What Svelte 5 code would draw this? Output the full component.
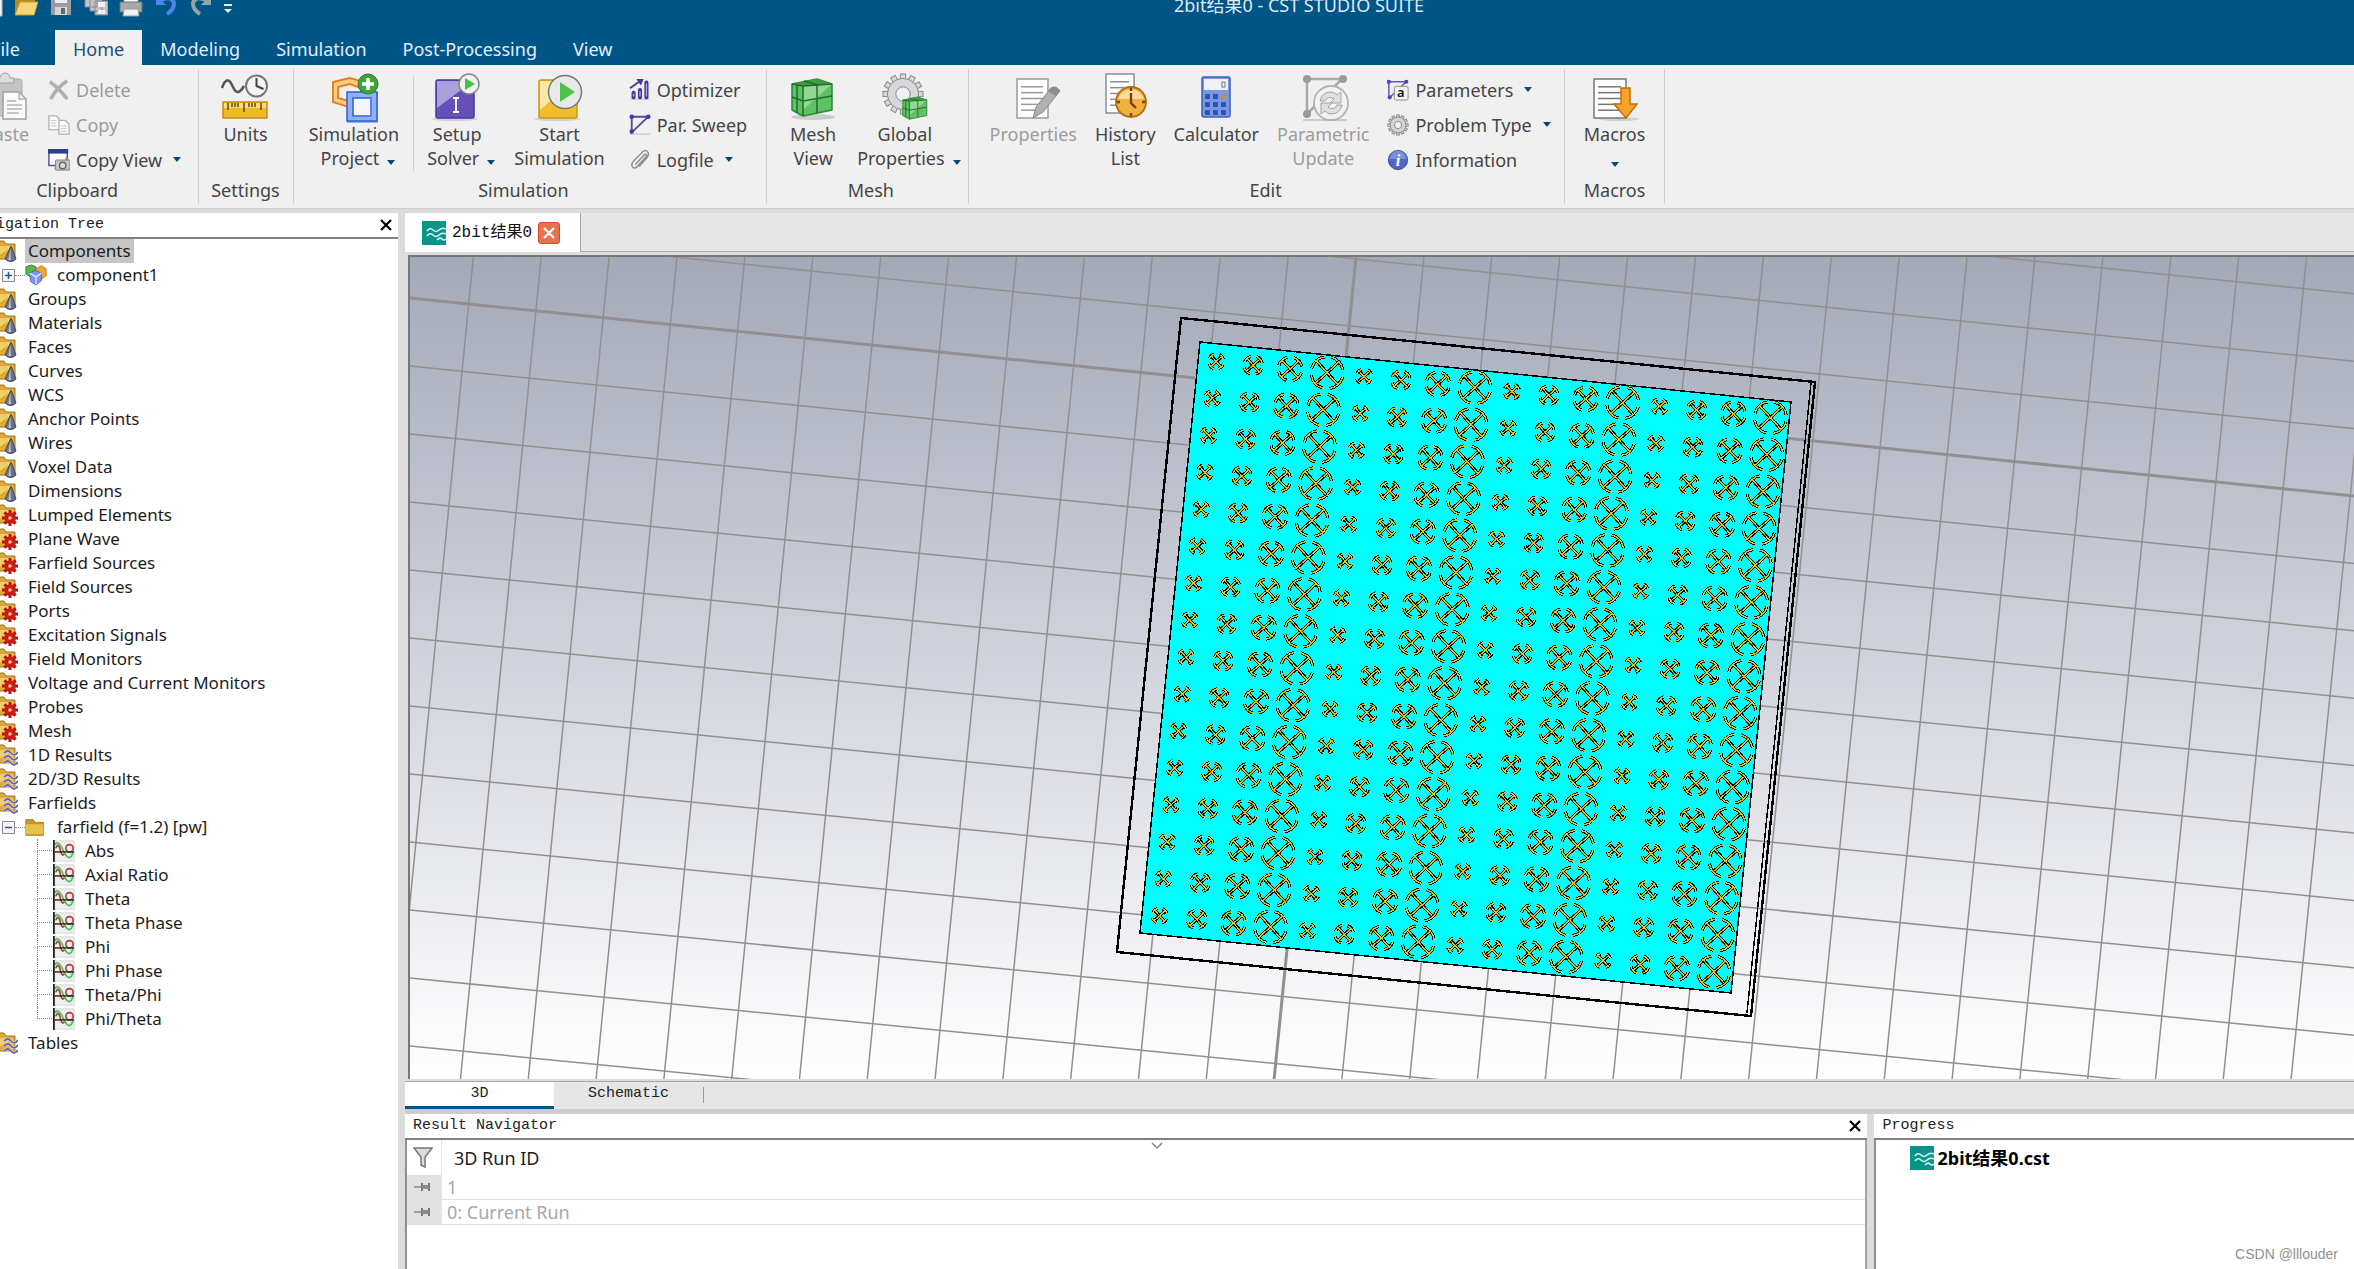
<script>
  const quickAccess = ['new', 'open', 'save', 'saveall', 'print', 'undo', 'redo'];
  const tabs = ['Home', 'Modeling', 'Simulation', 'Post-Processing', 'View'];

  const groups = [
    {
      name: 'Clipboard',
      items: [
        { icon: 'paste', lines: ['Paste'], disabled: true },
        {
          stack: [
            { icon: 'delete', label: 'Delete', disabled: true },
            { icon: 'copy', label: 'Copy', disabled: true },
            { icon: 'copyview', label: 'Copy View', arrow: true }
          ]
        }
      ]
    },
    { name: 'Settings', items: [{ icon: 'units', lines: ['Units'] }] },
    {
      name: 'Simulation',
      items: [
        { icon: 'project', lines: ['Simulation', 'Project'], arrow: true },
        { divider: true },
        { icon: 'solver', lines: ['Setup', 'Solver'], arrow: true },
        { icon: 'start', lines: ['Start', 'Simulation'] },
        {
          stack: [
            { icon: 'optimizer', label: 'Optimizer' },
            { icon: 'sweep', label: 'Par. Sweep' },
            { icon: 'clip', label: 'Logfile', arrow: true }
          ]
        }
      ]
    },
    {
      name: 'Mesh',
      items: [
        { icon: 'mesh', lines: ['Mesh', 'View'] },
        { icon: 'global', lines: ['Global', 'Properties'], arrow: true }
      ]
    },
    {
      name: 'Edit',
      items: [
        { icon: 'properties', lines: ['Properties'], disabled: true },
        { icon: 'history', lines: ['History', 'List'] },
        { icon: 'calculator', lines: ['Calculator'] },
        { icon: 'parametric', lines: ['Parametric', 'Update'], disabled: true },
        {
          stack: [
            { icon: 'parameters', label: 'Parameters', arrow: true },
            { icon: 'gear', label: 'Problem Type', arrow: true },
            { icon: 'info', label: 'Information' }
          ]
        }
      ]
    },
    { name: 'Macros', items: [{ icon: 'macros', lines: ['Macros', ''], arrow: true }] }
  ];

  const tree = [
    { label: 'Components', icon: 'cone', selected: true },
    { label: 'component1', icon: 'cubes', level: 1, expander: '+' },
    ...['Groups', 'Materials', 'Faces', 'Curves', 'WCS', 'Anchor Points', 'Wires', 'Voxel Data', 'Dimensions'].map(
      (label) => ({ label, icon: 'cone' })
    ),
    ...[
      'Lumped Elements',
      'Plane Wave',
      'Farfield Sources',
      'Field Sources',
      'Ports',
      'Excitation Signals',
      'Field Monitors',
      'Voltage and Current Monitors',
      'Probes',
      'Mesh'
    ].map((label) => ({ label, icon: 'redgear' })),
    ...['1D Results', '2D/3D Results', 'Farfields'].map((label) => ({ label, icon: 'waves' })),
    { label: 'farfield (f=1.2) [pw]', icon: 'folder', level: 1, expander: '-' },
    ...['Abs', 'Axial Ratio', 'Theta', 'Theta Phase', 'Phi', 'Phi Phase', 'Theta/Phi', 'Phi/Theta'].map(
      (label, i) => ({ label, icon: 'plot', level: 2, last: i === 7 })
    ),
    { label: 'Tables', icon: 'waves' }
  ];

  const runs = ['1', '0: Current Run'];

  // working plane grid, in the coordinates of the 3D view
  const rows = Array.from({ length: 15 }, (_, i) => i - 3).map((n) => ({
    n,
    y1: 41 + 68 * n,
    y2: 239 + 67.4 * n
  }));
  const cols = Array.from({ length: 33 }, (_, i) => i - 15).map((n) => ({
    n,
    x1: 946 + 67.9 * n,
    x2: 864 + 67.8 * n
  }));

  // four-step phase coding: the element grows from column to column
  const elements = [
    { r: 7.6, spread: 0.42 },
    { r: 9.2, spread: 0.48 },
    { r: 11.8, spread: 0.52 },
    { r: 16, spread: 0.57 }
  ].map(({ r, spread }) => {
    let d = '';
    for (let k = 0; k < 4; k++) {
      const a = Math.PI / 4 + (k * Math.PI) / 2;
      const p = (t) => `${(r * Math.cos(t)).toFixed(2)} ${(r * Math.sin(t)).toFixed(2)}`;
      d += `M0 0L${p(a)}M${p(a - spread)}A${r} ${r} 0 0 1 ${p(a + spread)}`;
    }
    return d;
  });

  const cells = [];
  for (let row = 0; row < 16; row++) {
    for (let col = 0; col < 16; col++) {
      cells.push({
        x: 806.2 + col * 36.95 - row * 3.77,
        y: 104.5 + col * 3.74 + row * 36.95,
        d: elements[col % 4]
      });
    }
  }

  let activeTab = 'Home';
  let activeView = '3D';
</script>

{#snippet gearShape(cx, cy, r, fill, stroke)}
  {#each Array.from({ length: 12 }, (_, i) => i * 30) as angle}
    <rect x={cx - r * 0.13} y={cy - r} width={r * 0.26} height={r * 0.4} {fill} {stroke} transform="rotate({angle} {cx} {cy})" />
  {/each}
  <circle {cx} {cy} r={r * 0.78} {fill} {stroke} />
  <circle {cx} {cy} r={r * 0.36} fill="#f0f0f0" {stroke} />
{/snippet}

{#snippet meshCube()}
  <path d="M3 10 28 5 43 10V36L14 42 3 36z" fill="#5fc064" stroke="#2c8a34" stroke-width="1.5" stroke-linejoin="round" />
  <path d="M3 10 28 5 43 10 14 12z" fill="#3f9d45" />
  <path d="M14 12 43 10 14 36z" fill="#a6e0a4" opacity=".7" />
  <path d="M14 12V42M14 12 43 10M3 10 14 12M28 11V39M3 23 14 27 43 22M8 11V39M15 7 29 11" fill="none" stroke="#1f6e28" stroke-width="1.5" />
{/snippet}

{#snippet page(x, y, w, h, stroke)}
  <rect {x} {y} width={w} height={h} fill="#fff" {stroke} stroke-width="1.5" />
  {#each [0.2, 0.35, 0.5, 0.65, 0.8] as t}
    <path d="M{x + 4} {y + h * t}H{x + w - 5}" {stroke} stroke-width="1.5" />
  {/each}
{/snippet}

{#snippet bigIcon(name)}
  <svg class="big-icon" viewBox="0 0 48 48" aria-hidden="true">
    {#if name === 'paste'}
      <rect x="6" y="5" width="34" height="37" rx="3" fill="#c4c4c4" stroke="#ababab" />
      <path d="M14 9V4h4a5 5 0 0 1 10 0h4v5z" fill="#dcdcdc" stroke="#a0a0a0" />
      <path d="M21 18h16l7 7v20H21z" fill="#fafafa" stroke="#a0a0a0" stroke-width="1.5" />
      <path d="M37 18v7h7M25 27h9M25 31h15M25 35h15M25 39h12" fill="none" stroke="#b4b4b4" stroke-width="1.5" />
    {:else if name === 'units'}
      <path d="M1 14C4 5 8 4 11 11s6 11 12 1" fill="none" stroke="#555" stroke-width="2.5" />
      <circle cx="35.5" cy="12" r="10.5" fill="#f4f4f4" stroke="#777" stroke-width="2" />
      <path d="M35.5 4v8l7 3" fill="none" stroke="#444" stroke-width="2" />
      <rect x="2" y="28" width="44" height="16" fill="#edbb28" stroke="#cc8614" stroke-width="1.5" />
      <rect x="3" y="29" width="42" height="5" fill="#f8dc7a" />
      <path d="M7 29v7M11 29v4M14 29v4M17 29v4M23 29v9M28 29v4M31 29v4M34 29v4M40 29v7" stroke="#5e4a10" stroke-width="1.5" />
    {:else if name === 'project'}
      <path d="M3 8 20 4l17 5v17l-15 8L3 28z" fill="#ffcc85" stroke="#e0851c" stroke-width="2" />
      <path d="M8 13 20 10l11 4v9l-9 5-14-4z" fill="#f0f0f0" stroke="#e0851c" stroke-width="2" />
      <rect x="20" y="21" width="25" height="25" fill="none" stroke="#8fb0f4" stroke-width="6" />
      <rect x="17" y="18" width="30" height="29" fill="none" stroke="#2f5ed0" stroke-width="1.5" />
      <rect x="23" y="24" width="18" height="18" fill="#f4f6fb" stroke="#2f5ed0" stroke-width="1.5" />
      <circle cx="38" cy="10" r="10" fill="#3da43b" stroke="#277e29" />
      <path d="M38 4v12M32 10h12" stroke="#fff" stroke-width="3.5" />
    {:else if name === 'solver'}
      <ellipse cx="22" cy="45" rx="23" ry="2" fill="#d2d2d2" />
      <rect x="3" y="6" width="38" height="38" rx="2" fill="#6650b8" stroke="#4a36a0" stroke-width="1.5" />
      <path d="M4 7H40L4 34z" fill="#aaa0dc" />
      <path d="M20 24h6M20 38h6M23 24v14" stroke="#fff" stroke-width="1.8" />
      <circle cx="36" cy="10" r="10" fill="#f0f0f0" stroke="#888" stroke-width="1.5" />
      <path d="M32 4v12l10-6z" fill="#46c044" />
    {:else if name === 'start'}
      <ellipse cx="22" cy="45" rx="23" ry="2" fill="#d2d2d2" />
      <rect x="4" y="6" width="38" height="38" rx="2" fill="#f2bd2a" stroke="#d19516" stroke-width="1.5" />
      <path d="M5 7H38L5 36z" fill="#fbe7a8" />
      <circle cx="30" cy="18" r="16.5" fill="#e8e8e8" stroke="#777" stroke-width="1.5" />
      <path d="M25 8v20l15-10z" fill="#4cc24a" />
    {:else if name === 'mesh'}
      <ellipse cx="24" cy="43" rx="22" ry="3" fill="#ccc" />
      {@render meshCube()}
    {:else if name === 'global'}
      {@render gearShape(22, 20, 20, '#d8d8dc', '#8a8a8a')}
      <g transform="translate(20 20) scale(.6)">{@render meshCube()}</g>
    {:else if name === 'properties'}
      {@render page(8, 5, 31, 39, '#9a9a9a')}
      <path d="M24 44l3-11L42 14q5-3 9 3L34 38z" fill="#b0b0b0" stroke="#8a8a8a" />
      <path d="M42 14q5-3 9 3l-4 5-8-5z" fill="#8c8c8c" />
    {:else if name === 'history'}
      {@render page(5, 0, 28, 39, '#8c8c8c')}
      <circle cx="30" cy="28" r="15" fill="#f2b03c" stroke="#b3690f" stroke-width="1.8" />
      <path d="M17 25a13.5 13.5 0 0 1 26 0z" fill="#fde6b4" opacity=".8" />
      <path d="M30 19v10l5 5M30 14v3M30 39v3M16 28h3M41 28h3" fill="none" stroke="#7d3c0b" stroke-width="2.4" />
    {:else if name === 'calculator'}
      <rect x="10" y="3" width="28" height="40" rx="2" fill="#7a98e0" stroke="#3d60c0" stroke-width="1.5" />
      <rect x="12" y="5" width="24" height="11" fill="#eef2fc" />
      <rect x="30" y="8" width="3" height="5" fill="none" stroke="#777" />
      {#each [20, 28, 36] as y, r}
        {#each [13, 21, 29] as x, c}
          <rect {x} {y} width="5" height="5" rx="1" fill={r === 0 && c === 2 ? '#c98a3c' : '#2b52b4'} />
        {/each}
      {/each}
    {:else if name === 'parametric'}
      <path d="M4 46h44" stroke="#ccc" stroke-width="2" />
      <path d="M8 5V40L43 5z" fill="none" stroke="#a8a8a8" stroke-width="2.5" />
      <circle cx="8" cy="5" r="4" fill="#9a9a9a" />
      <circle cx="44" cy="5" r="4" fill="#9a9a9a" />
      <circle cx="8" cy="40" r="4" fill="#9a9a9a" />
      <circle cx="32" cy="29" r="17" fill="#f2f2f2" stroke="#b4b4b4" stroke-width="1.8" />
      <path d="M21 27q2-9 11-9 4 0 6 3l4-3v11H31l4-4q-6-4-9 2z" fill="#dedede" stroke="#a6a6a6" />
      <path d="M43 31q-2 9-11 9-4 0-6-3l-4 3V29h11l-4 4q6 4 9-2z" fill="#dedede" stroke="#a6a6a6" />
    {:else if name === 'macros'}
      <ellipse cx="28" cy="45" rx="20" ry="2" fill="#d2d2d2" />
      {@render page(3, 5, 32, 39, '#777')}
      <path d="M30 14h9v16h7L35 44 23 30h7z" fill="#f5a427" stroke="#c46d10" stroke-width="1.5" />
    {/if}
  </svg>
{/snippet}

{#snippet smallIcon(name)}
  <svg class="small-icon" viewBox="0 0 24 24" aria-hidden="true">
    {#if name === 'delete'}
      <path d="M2 3Q12 10 21 22M21 2Q9 10 3 22" fill="none" stroke="#b0b0b0" stroke-width="4" />
    {:else if name === 'copy'}
      <path d="M1 2h8l3 3v12H1zM12 7h7l4 4v11H12z" fill="#fafafa" stroke="#b4b4b4" stroke-width="1.5" />
      <path d="M3 7h6M3 10h6M3 13h6M14 13h6M14 16h6M14 19h6" stroke="#c4c4c4" />
    {:else if name === 'copyview'}
      <rect x="1" y="1" width="20" height="17" fill="#fff" stroke="#3a4f9e" stroke-width="1.5" />
      <rect x="0" y="0" width="22" height="5" fill="#2c3f91" />
      <rect x="8" y="12" width="16" height="11" rx="1" fill="#c4c4c4" stroke="#777" />
      <rect x="19" y="9" width="3" height="3" fill="#888" />
      <circle cx="16" cy="18" r="3.5" fill="#ddd" stroke="#666" stroke-width="1.5" />
    {:else if name === 'optimizer'}
      <path d="M1 22h22" stroke="#ccc" stroke-width="1.5" />
      <path d="M5 20v-5M12 20v-8M19 20V4" stroke="#46359a" stroke-width="4.5" stroke-linecap="round" />
      <path d="M5 19v-3M12 19v-6M19 19V5" stroke="#aba4dd" stroke-width="1.5" />
      <path d="M1 10 11 3" stroke="#46359a" stroke-width="2" />
      <path d="M8 0h8l-3 7z" fill="#46359a" />
    {:else if name === 'sweep'}
      <path d="M1 22h22" stroke="#ccc" stroke-width="1.5" />
      <path d="M3 3v17L21 3z" fill="none" stroke="#5a4896" stroke-width="2" />
      <circle cx="3" cy="3" r="2.5" fill="#4a36a8" />
      <circle cx="21" cy="3" r="2.5" fill="#4a36a8" />
      <circle cx="3" cy="19" r="2.5" fill="#4a36a8" />
    {:else if name === 'clip'}
      <path d="M7 17 17 6q3-1 2 2L9 19q-4 4-6-1 0-3 2-5L15 3q4-3 6 1 1 2-1 5l-9 10" fill="none" stroke="#909090" stroke-width="1.6" />
    {:else if name === 'parameters'}
      <path d="M2 21V3H21L2 21" fill="none" stroke="#6a51c8" stroke-width="1.6" />
      <circle cx="2" cy="3" r="2.3" fill="#5a3fc4" />
      <circle cx="21" cy="3" r="2.3" fill="#5a3fc4" />
      <circle cx="3" cy="20" r="2.3" fill="#5a3fc4" />
      <rect x="8" y="8" width="15" height="15" rx="2" fill="#f4f4f4" stroke="#888" />
      <text x="15" y="20" text-anchor="middle" class="glyph">a</text>
    {:else if name === 'gear'}
      {@render gearShape(12, 12, 11, '#d4d4d4', '#8a8a8a')}
    {:else if name === 'info'}
      <circle cx="12" cy="12" r="10.5" fill="#5068c4" stroke="#33479c" />
      <path d="M3 11a9 9 0 0 1 18 0z" fill="#8fa0e2" opacity=".7" />
      <text x="12" y="18" text-anchor="middle" class="glyph info">i</text>
    {/if}
  </svg>
{/snippet}

{#snippet quickIcon(name)}
  <svg class="small-icon" viewBox="0 0 24 24" aria-hidden="true">
    {#if name === 'new'}
      <path d="M3 0h20v23H3z" fill="#f4f4f4" stroke="#bbb" />
    {:else if name === 'open'}
      <path d="M1 3h10l2 2h8v17H1z" fill="#b98a20" />
      <path d="M6 9h18l-4 13H1z" fill="#f6d67a" stroke="#cc9a28" />
    {:else if name === 'save'}
      <path d="M2 1h20v21H2z" fill="#9c9ca0" />
      <path d="M6 1h12v9H6z" fill="#eee" />
      <path d="M6 14h12v8H6z" fill="#d6d6d6" />
      <path d="M12 15h4v6h-4z" fill="#666" />
    {:else if name === 'saveall'}
      <path d="M1 1h12v13H1zM6 5h12v13H6zM11 8h13v14H11z" fill="#c4c4c8" stroke="#88888c" />
      <path d="M14 9h7v5h-7zM14 17h7v4h-7z" fill="#f0f0f0" />
    {:else if name === 'print'}
      <path d="M5 0h14v10H5z" fill="#fafafa" stroke="#aaa" />
      <path d="M1 9h22v10H1z" fill="#a8a8ac" stroke="#707074" />
      <path d="M5 16h14l1 7H4z" fill="#f2f2f2" stroke="#999" />
      <circle cx="19" cy="12" r="1.5" fill="#6fe05c" />
    {:else if name === 'undo'}
      <path d="M4 9Q17 1 20 10q0 7-7 11" fill="none" stroke="#4c86ec" stroke-width="4" />
      <path d="M2 2v10h10z" fill="#4c86ec" />
    {:else if name === 'redo'}
      <path d="M20 9Q7 1 4 10q0 7 7 11" fill="none" stroke="#98a2aa" stroke-width="4" />
      <path d="M22 2v10H12z" fill="#98a2aa" />
    {/if}
  </svg>
{/snippet}

{#snippet treeIcon(name)}
  <svg class="tree-icon" viewBox="0 0 24 24" aria-hidden="true">
    {#if name === 'cone' || name === 'redgear' || name === 'waves'}
      <path d="M0 4q0-2 2-2h8l2 3h9v15H0z" fill="#dba83c" stroke="#a87415" />
      <path d="M0 7h20v12H0z" fill="#f1ce6c" />
      <path d="M20 7v12H0z" fill="#e0ac2c" />
    {/if}
    {#if name === 'cone'}
      <path d="M17 7 22 20q-5 5-11 0z" fill="#6d7186" stroke="#44475a" />
      <path d="M16.5 10 14 21h3z" fill="#b4b8cc" />
    {:else if name === 'redgear'}
      {#each [0, 45, 90, 135] as angle}
        <rect x="14.5" y="7" width="3" height="16" fill="#b51414" transform="rotate({angle} 16 15)" />
      {/each}
      <circle cx="16" cy="15" r="5.5" fill="#c81c1c" />
      <circle cx="16" cy="15" r="1.8" fill="#f1ce6c" />
    {:else if name === 'waves'}
      <path d="M10 10q4-4 7 0t7-1M10 15q4-4 7 0t7-1M10 20q4-4 7 0t7-1" fill="none" stroke="#f8ecc4" stroke-width="3" />
      <path d="M10 10q4-4 7 0t7-1M10 15q4-4 7 0t7-1M10 20q4-4 7 0t7-1" fill="none" stroke="#6a62b8" stroke-width="1.8" />
    {:else if name === 'folder'}
      <path d="M1 4h8l2 3h9v14H1z" fill="#c9932a" stroke="#a87415" />
      <path d="M1 9h19v11H1z" fill="#e9bf4e" />
    {:else if name === 'cubes'}
      <path d="M1 3l6-2 5 2v9l-6 2-5-3z" fill="#54b848" stroke="#2f8a2c" />
      <path d="M12 5l6-3 5 3v8l-6 4-5-3z" fill="#f4a634" stroke="#c47a18" />
      <path d="M5 10l6-3 7 3v8l-6 5-6-4z" fill="#7d96f2" stroke="#4a60cc" />
      <path d="M5 10l7 4 6-4M12 14v8" fill="none" stroke="#dfe5ff" stroke-width="1.5" />
    {:else if name === 'plot'}
      <path d="M1 1h22v22H1z" fill="#efefef" stroke="#d4d4d4" />
      <path d="M3 9q3-7 5 2t5 3" fill="none" stroke="#b83a3a" stroke-width="1.8" />
      <circle cx="18" cy="9" r="4" fill="none" stroke="#b83a3a" stroke-width="1.8" />
      <path d="M2 5q4-5 8 4t7 10 5-6" fill="none" stroke="#46c458" stroke-width="2" />
      <path d="M2 13h21" stroke="#222" stroke-width="1.5" />
      <path d="M1 0v24" stroke="#222" stroke-width="2" />
    {/if}
  </svg>
{/snippet}

{#snippet cstLogo()}
  <svg class="logo" viewBox="0 0 24 24" aria-hidden="true">
    <path d="M0 0h24v24H0z" fill="#0a938b" />
    <path d="M5 10q3-4 6-1t6 0 7-1M5 15q3-4 6-1t6 0 7-1M15 19q3-3 5-1t4 0" fill="none" stroke="#d8f2f0" stroke-width="1.6" />
  </svg>
{/snippet}

{#snippet cross()}
  <svg class="cross" viewBox="0 0 12 12" aria-hidden="true">
    <path d="M1 1 11 11M11 1 1 11" stroke="currentColor" stroke-width="2.2" />
  </svg>
{/snippet}

<div class="window">
  <header class="title-bar">
    <div class="quick-access">
      {#each quickAccess as name}
        <button type="button" aria-label={name}>{@render quickIcon(name)}</button>
      {/each}
      <button type="button" aria-label="Customize">
        <svg width="8" height="18" viewBox="0 0 8 18"><path d="M0 8h8v2H0zM0 13h8l-4 4z" fill="#e6eef4" /></svg>
      </button>
    </div>
    <h1>2bit结果0 - CST STUDIO SUITE</h1>
  </header>

  <nav class="tabs">
    <button type="button" class="file">File</button>
    {#each tabs as tab}
      <button type="button" class:active={activeTab === tab} on:click={() => (activeTab = tab)}>{tab}</button>
    {/each}
  </nav>

  <div class="ribbon">
    {#each groups as group}
      <section class="group {group.name.toLowerCase()}">
        <div class="group-items">
          {#each group.items as item}
            {#if item.divider}
              <span class="divider"></span>
            {:else if item.stack}
              <div class="stack">
                {#each item.stack as entry}
                  <button type="button" class="small" disabled={entry.disabled}>
                    {@render smallIcon(entry.icon)}
                    <span>{entry.label}</span>
                    {#if entry.arrow}<i class="arrow"></i>{/if}
                  </button>
                {/each}
              </div>
            {:else}
              <button type="button" class="big" disabled={item.disabled}>
                {@render bigIcon(item.icon)}
                {#each item.lines as line, i}
                  <span class="line">
                    {line}
                    {#if item.arrow && i === 1}<i class="arrow" class:after={line}></i>{/if}
                  </span>
                {/each}
              </button>
            {/if}
          {/each}
        </div>
        <h2>{group.name}</h2>
      </section>
    {/each}
  </div>

  <div class="workspace">
    <aside class="panel tree-panel">
      <div class="panel-title">
        <h3>Navigation Tree</h3>
        <button type="button" aria-label="Close navigation tree">{@render cross()}</button>
      </div>
      <ul class="tree">
        {#each tree as node}
          <li class="level-{node.level ?? 0}" class:last={node.last}>
            {#if node.expander}
              <button type="button" class="expander" aria-label="Toggle {node.label}">
                <svg width="13" height="13" viewBox="0 0 13 13">
                  <path d="M.5.5h12v12H.5z" fill="#f6f6f6" stroke="#8a8a8a" />
                  <path d={node.expander === '+' ? 'M3 6.5h7M6.5 3v7' : 'M3 6.5h7'} stroke="#2c4fa8" stroke-width="1.5" />
                </svg>
              </button>
              <span class="dots"></span>
            {/if}
            {@render treeIcon(node.icon)}
            <span class="node-label" class:selected={node.selected}>{node.label}</span>
          </li>
        {/each}
      </ul>
    </aside>

    <main>
      <div class="documents">
        <div class="document">
          {@render cstLogo()}
          <span>2bit结果0</span>
          <button type="button" aria-label="Close document">{@render cross()}</button>
        </div>
      </div>

      <div class="view">
        <svg class="scene" viewBox="0 0 1944 823" preserveAspectRatio="xMinYMin slice" role="img" aria-label="3D model">
          <defs>
            <linearGradient id="sky" x1="0" y1="0" x2="0" y2="1">
              <stop offset="0" stop-color="#a4a9b8" />
              <stop offset=".5" stop-color="#d2d4dd" />
              <stop offset="1" stop-color="#ffffff" />
            </linearGradient>
          </defs>
          <rect width="1944" height="823" fill="url(#sky)" />
          <g stroke="#909090">
            {#each rows as { n, y1, y2 }}
              <line x1="0" {y1} x2="1944" {y2} stroke-width={n === 0 ? 3 : 1.5} />
            {/each}
            {#each cols as { n, x1, x2 }}
              <line {x1} y1="0" {x2} y2="823" stroke-width={n === 0 ? 3 : 1.5} />
            {/each}
          </g>
          <g shape-rendering="crispEdges" fill="none" stroke="#000">
            <path d="M771 61 1405 125 1341 759 707 695z" stroke-width="2.4" />
            <path d="M1401 126 1337 756" stroke-width="1.5" />
            <path d="M790 85 1381 145 1321 736 730 676z" fill="#00ffff" stroke-width="1.5" />
            {#each cells as cell}
              <g transform="translate({cell.x} {cell.y}) rotate(3)">
                <path d={cell.d} stroke-width="3.2" />
                <path d={cell.d} stroke="#dcc612" stroke-width="1.3" />
              </g>
            {/each}
          </g>
        </svg>
      </div>

      <div class="view-tabs">
        {#each ['3D', 'Schematic'] as view}
          <button type="button" class:active={activeView === view} on:click={() => (activeView = view)}>{view}</button>
        {/each}
        <span class="tab-end"></span>
      </div>

      <div class="docks">
        <section class="panel results">
          <div class="panel-title">
            <h3>Result Navigator</h3>
            <button type="button" aria-label="Close result navigator">{@render cross()}</button>
          </div>
          <div class="panel-body">
            <svg class="chevron" width="12" height="8" viewBox="0 0 12 8"><path d="M1 1l5 5 5-5" fill="none" stroke="#888" stroke-width="1.5" /></svg>
            <table>
              <thead>
                <tr>
                  <th class="mark">
                    <svg width="20" height="22" viewBox="0 0 20 22"><path d="M1 1h18l-7 9v10l-4-2v-8z" fill="#dcdcdc" stroke="#777" stroke-width="1.5" /></svg>
                  </th>
                  <th>3D Run ID</th>
                </tr>
              </thead>
              <tbody>
                {#each runs as run}
                  <tr>
                    <td class="mark">
                      <svg width="18" height="8" viewBox="0 0 18 8"><path d="M1 4h7" stroke="#888" stroke-width="1.5" /><path d="M9 0v8M16 0v8" stroke="#777" stroke-width="2" /><path d="M9 2h7v4H9z" fill="#8a8a8a" /></svg>
                    </td>
                    <td>{run}</td>
                  </tr>
                {/each}
              </tbody>
            </table>
          </div>
        </section>

        <section class="panel progress">
          <div class="panel-title"><h3>Progress</h3></div>
          <div class="panel-body">
            <p class="job">{@render cstLogo()}2bit结果0.cst</p>
            <p class="credit">CSDN @lllouder</p>
          </div>
        </section>
      </div>
    </main>
  </div>
</div>

<style>
  :global(body) {
    margin: 0;
    overflow: hidden;
    background: #e6e6e6;
  }

  /* the window hangs over the top left corner of the screen */
  .window {
    display: flex;
    flex-direction: column;
    height: calc(100vh + 20px);
    margin: -20px 0 0 -36px;
    font-family: 'Noto Sans', 'Noto Sans CJK SC', sans-serif;
    font-size: 18px;
    line-height: 24px;
    color: #444;
  }

  button {
    margin: 0;
    padding: 0;
    border: none;
    background: none;
    font: inherit;
    color: inherit;
    white-space: nowrap;
  }

  button:disabled {
    color: #9c9c9c;
  }

  h1,
  h2,
  h3,
  p,
  ul {
    margin: 0;
    padding: 0;
    font: inherit;
  }

  svg {
    display: block;
    flex: none;
  }

  .title-bar {
    display: flex;
    align-items: center;
    height: 50px;
    background: #005587;
    color: #dfe9f0;
  }

  .title-bar h1 {
    flex: 1;
    padding-left: 12px;
    text-align: center;
  }

  .quick-access {
    display: flex;
    gap: 11px;
    padding-left: 15px;
  }

  .small-icon {
    width: 24px;
    height: 24px;
  }

  .tabs {
    display: flex;
    height: 35px;
    background: #005587;
    color: #e4eef5;
  }

  .tabs button {
    padding: 2px 18px 0;
  }

  .tabs .file {
    width: 83px;
    margin-right: 8px;
  }

  .tabs .active {
    background: #f0f0f0;
    color: #1d4f7c;
  }

  .ribbon {
    display: flex;
    height: 143px;
    border-bottom: 1px solid #cbcbcb;
    background: #f0f0f0;
  }

  .group {
    display: flex;
    flex-direction: column;
    justify-content: space-between;
    margin: 4px 0;
    padding: 3px 13px 2px 12px;
    border-right: 1px solid #cfcfcf;
  }

  .group.clipboard {
    padding-right: 17px;
    padding-left: 9px;
  }

  .group.simulation {
    padding-right: 19px;
    padding-left: 6px;
  }

  .group.mesh {
    padding-right: 5px;
  }

  .group.macros {
    padding-right: 10px;
    padding-left: 10px;
  }

  .group h2 {
    text-align: center;
  }

  .group-items {
    display: flex;
    justify-content: center;
    height: 105px;
  }

  .big {
    display: flex;
    flex-direction: column;
    align-items: center;
    padding: 2px 9px 0;
  }

  .mesh .big {
    padding-right: 10px;
    padding-left: 10px;
  }

  .simulation .big {
    padding-right: 12px;
  }

  .simulation .divider + .big {
    padding-right: 18px;
  }

  .big-icon {
    width: 48px;
    height: 48px;
    overflow: visible;
  }

  .line {
    display: flex;
    align-items: center;
    height: 24px;
  }

  .arrow {
    border: 4px solid transparent;
    border-top: 5px solid #004a75;
    border-bottom: none;
  }

  .line .arrow {
    margin-top: 12px;
  }

  .line .after {
    margin: 8px -8px 0 8px;
  }

  .divider {
    width: 1px;
    height: 95px;
    margin: 4px 4px 0 2px;
    background: #cfcfcf;
  }

  .stack {
    display: flex;
    flex-direction: column;
    padding-left: 12px;
  }

  .edit .stack,
  .clipboard .stack {
    padding-left: 9px;
  }

  .small {
    display: flex;
    align-items: center;
    gap: 6px;
    height: 35px;
  }

  .small .arrow {
    margin-left: 5px;
  }

  .small .small-icon {
    width: 22px;
    height: 22px;
  }

  .glyph {
    fill: #111;
    font-size: 14px;
    font-weight: 600;
  }

  .info {
    fill: #fff;
    font-family: 'Liberation Serif', serif;
    font-size: 18px;
    font-style: italic;
  }

  .workspace {
    display: flex;
    flex: 1;
    min-height: 0;
    padding-top: 4px;
    background: #dcdcdc;
  }

  .panel {
    display: flex;
    flex-direction: column;
    background: #fff;
  }

  .panel-title {
    display: flex;
    align-items: center;
    justify-content: space-between;
    height: 24px;
    padding: 0 6px 0 8px;
    border-bottom: 2px solid #808080;
    background: #fff;
    color: #222;
    font-family: 'Liberation Mono', 'Noto Sans CJK SC', monospace;
    font-size: 15px;
  }

  .cross {
    width: 12px;
    height: 12px;
    color: #000;
  }

  .tree-panel {
    width: 434px;
    flex: none;
  }

  .tree-panel .panel-title {
    padding-left: 5px;
  }

  .tree {
    list-style: none;
    color: #1c1c1c;
    font-size: 17px;
  }

  .tree li {
    display: flex;
    align-items: center;
    height: 24px;
    padding-left: 30px;
  }

  .tree .level-1 {
    padding-left: 38px;
  }

  .tree .level-2 {
    position: relative;
    padding-left: 89px;
  }

  .level-2::before {
    position: absolute;
    top: 0;
    left: 73px;
    width: 14px;
    height: 11px;
    border-bottom: 1px dotted #888;
    border-left: 1px dotted #888;
    content: '';
  }

  .level-2:not(.last)::after {
    position: absolute;
    top: 12px;
    left: 73px;
    height: 12px;
    border-left: 1px dotted #888;
    content: '';
  }

  .dots {
    width: 10px;
    border-top: 1px dotted #888;
  }

  .tree-icon {
    width: 24px;
    height: 24px;
  }

  .level-1 .tree-icon,
  .level-2 .tree-icon {
    width: 22px;
    height: 22px;
  }

  .node-label {
    margin-left: 7px;
    padding: 0 3px;
    white-space: nowrap;
  }

  .selected {
    background: #c6c6c6;
  }

  main {
    display: flex;
    flex: 1;
    flex-direction: column;
    min-width: 0;
    margin-left: 7px;
  }

  .documents {
    display: flex;
    height: 38px;
    border-bottom: 1px solid #a8a8a8;
    background: #e6e6e6;
  }

  .document {
    display: flex;
    align-items: center;
    gap: 6px;
    height: 39px;
    padding: 0 20px 0 17px;
    border-right: 1px solid #a8a8a8;
    background: #fff;
    color: #111;
    font-family: 'Liberation Mono', 'Noto Sans CJK SC', monospace;
    font-size: 16px;
  }

  .document button {
    padding: 4px;
    border: 1px solid #d9482c;
    border-radius: 3px;
    background: #e8714f;
  }

  .document .cross {
    color: #fff;
  }

  .logo {
    width: 24px;
    height: 24px;
  }

  .view {
    flex: 1;
    min-height: 0;
    margin: 3px 0 2px 3px;
    border-top: 2px solid #777;
    border-left: 2px solid #777;
  }

  .scene {
    width: 100%;
    height: 100%;
  }

  .view-tabs {
    display: flex;
    height: 27px;
    border-top: 1px solid #a8a8a8;
    border-bottom: 5px solid #cdcdcd;
    background: #e6e6e6;
    color: #222;
    font-family: 'Liberation Mono', monospace;
    font-size: 15px;
  }

  .view-tabs button {
    width: 149px;
    border-bottom: 3px solid transparent;
  }

  .view-tabs .active {
    border-color: #005587;
    background: #fff;
  }

  .tab-end {
    width: 1px;
    height: 16px;
    margin-top: 5px;
    background: #999;
  }

  .docks {
    display: grid;
    grid-template-columns: 61fr 20fr;
    gap: 7px;
    height: 155px;
  }

  .results {
    min-width: 0;
  }

  .panel-body {
    position: relative;
    flex: 1;
    border-left: 2px solid #909090;
  }

  .results .panel-body {
    border-right: 2px solid #a0a4ac;
  }

  .chevron {
    position: absolute;
    top: 2px;
    left: 51%;
  }

  table {
    width: 100%;
    border-collapse: collapse;
    text-align: left;
  }

  th {
    height: 35px;
    padding: 0 0 0 12px;
    color: #222;
    font-weight: normal;
  }

  td {
    height: 24px;
    padding: 0 0 0 5px;
    border-bottom: 1px solid #e2e2e2;
    color: #a8a8a8;
  }

  .mark {
    width: 28px;
    padding: 0 0 0 6px;
    border-right: 1px solid #e2e2e2;
  }

  td.mark {
    background: #e2e2e2;
  }

  .job {
    display: flex;
    align-items: center;
    gap: 3px;
    padding: 6px 0 0 34px;
    color: #000;
    font-weight: bold;
  }

  .credit {
    position: absolute;
    right: 16px;
    bottom: 3px;
    color: #909090;
    font-family: 'Liberation Sans', sans-serif;
    font-size: 14px;
  }
</style>
